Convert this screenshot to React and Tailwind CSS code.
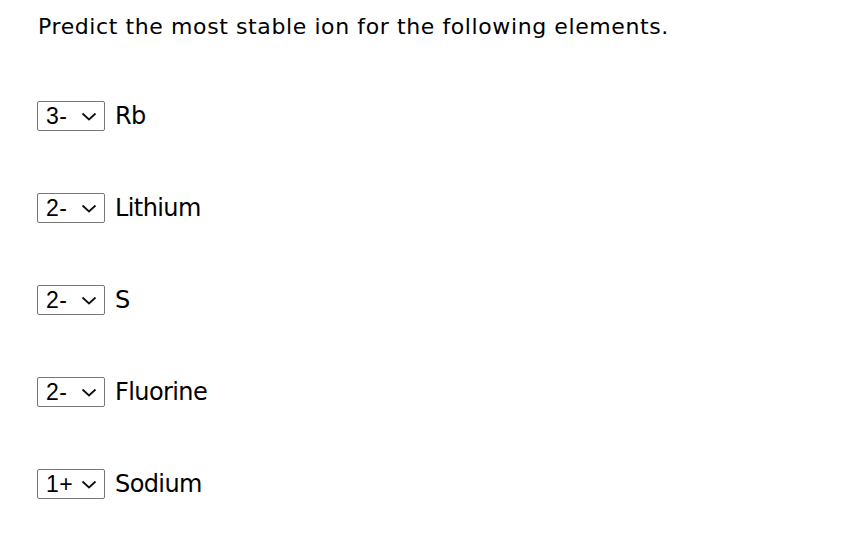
import React from 'react';

const rows = [
  { value: '3-', label: 'Rb' },
  { value: '2-', label: 'Lithium' },
  { value: '2-', label: 'S' },
  { value: '2-', label: 'Fluorine' },
  { value: '1+', label: 'Sodium' },
];

function FakeSelect({ value }) {
  return (
    <div className="w-[68px] h-[30px] border border-[#767676] rounded-[2px] bg-white flex items-center pl-[8px] pr-[7px] justify-between">
      <span className="text-[23px] text-black leading-none tracking-[0.5px]" style={{ fontFamily: '"Liberation Sans", Arial, sans-serif' }}>{value}</span>
      <svg width="16" height="9" viewBox="0 0 16 9" fill="none">
        <path d="M1.5 1.5 L8 7.5 L14.5 1.5" stroke="#111" strokeWidth="1.8" strokeLinejoin="miter" />
      </svg>
    </div>
  );
}

export default function App() {
  return (
    <div className="w-[868px] h-[540px] bg-white pl-[38px] pt-[13px] text-black" style={{ fontFamily: '"DejaVu Sans", Verdana, sans-serif' }}>
      <p className="text-[22px] leading-[28px] tracking-[0.6px]">Predict the most stable ion for the following elements.</p>
      <div className="flex flex-col gap-[62px] mt-[60px] -ml-px">
        {rows.map((r, i) => (
          <div key={i} className="flex items-center gap-[10px]">
            <FakeSelect value={r.value} />
            <span className="text-[24px] leading-none tracking-[-0.6px]">{r.label}</span>
          </div>
        ))}
      </div>
    </div>
  );
}
